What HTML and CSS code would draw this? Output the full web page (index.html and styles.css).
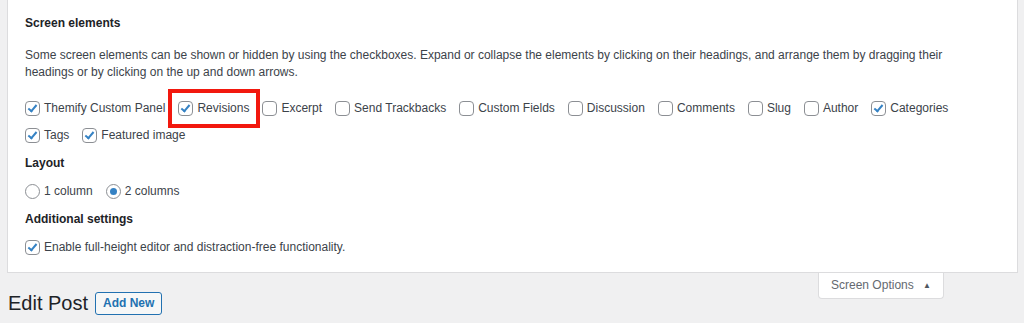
FILE: index.html
```html
<!DOCTYPE html>
<html lang="en">
<head>
  <meta charset="UTF-8">
  <title>Edit Post - Screen Options</title>
  <link rel="stylesheet" href="styles.css">
</head>
<body>
  <!-- Screen options panel -->
  <div id="screenOptions" class="panel">
    <fieldset class="metabox-prefs">
      <legend>Screen elements</legend>
      <p class="desc">Some screen elements can be shown or hidden by using the checkboxes. Expand or collapse the elements by clicking on their headings, and arrange them by dragging their headings or by clicking on the up and down arrows.</p>
      <div class="options">
        <label class="opt"><span class="box checked"></span>Themify Custom Panel</label>
        <label class="opt highlight"><span class="box checked"></span>Revisions</label>
        <label class="opt"><span class="box"></span>Excerpt</label>
        <label class="opt"><span class="box"></span>Send Trackbacks</label>
        <label class="opt"><span class="box"></span>Custom Fields</label>
        <label class="opt"><span class="box"></span>Discussion</label>
        <label class="opt"><span class="box"></span>Comments</label>
        <label class="opt"><span class="box"></span>Slug</label>
        <label class="opt"><span class="box"></span>Author</label>
        <label class="opt"><span class="box checked"></span>Categories</label>
        <label class="opt"><span class="box checked"></span>Tags</label>
        <label class="opt"><span class="box checked"></span>Featured image</label>
      </div>
    </fieldset>

    <fieldset class="columns-prefs">
      <legend>Layout</legend>
      <div class="options">
        <label class="opt"><span class="radio"></span>1 column</label>
        <label class="opt"><span class="radio checked"></span>2 columns</label>
      </div>
    </fieldset>

    <fieldset class="editor-expand">
      <legend>Additional settings</legend>
      <div class="options">
        <label class="opt"><span class="box checked"></span>Enable full-height editor and distraction-free functionality.</label>
      </div>
    </fieldset>
  </div>

  <!-- Screen options tab + title -->
  <div class="meta-links">
    <button class="meta-toggle">Screen Options <span class="arrow">&#9650;</span></button>
  </div>
  <div class="wrap-title">
    <h1>Edit Post</h1>
    <a class="page-title-action" href="#">Add New</a>
  </div>
</body>
</html>
```

FILE: styles.css
```css
body {
  margin: 0;
  background: #f0f0f1;
  color: #3c434a;
  font: 12px/1.4 "Liberation Sans", Arial, sans-serif;
}
/* Screen options panel */
.panel {
  margin: 0 6px 0 7px;
  padding: 14px 17px 11px;
  background: #fff;
  border: 1px solid #dcdcde;
  border-top: 0;
}
fieldset {
  margin: 0;
  padding: 0;
  border: 0;
}
legend {
  padding: 0;
  color: #1d2327;
  font-weight: 600;
  line-height: 18px;
}
.desc {
  margin: 15px 0 0;
  line-height: 17px;
  padding-right: 20px;
}
.options {
  display: flex;
  flex-wrap: wrap;
  column-gap: 13px;
  margin-top: 14px;
}
.columns-prefs,
.editor-expand {
  margin-top: 5px;
}
.columns-prefs .options,
.editor-expand .options {
  margin-top: 6px;
}
.editor-expand legend {
  margin-top: 2px;
}
.opt {
  position: relative;
  display: flex;
  align-items: center;
  height: 27px;
  white-space: nowrap;
}
.box,
.radio {
  box-sizing: border-box;
  flex: none;
  width: 15px;
  height: 15px;
  margin-right: 4px;
  border: 1px solid #8c8f94;
  border-radius: 4px;
  background: #fff;
  position: relative;
}
.box.checked::after {
  content: "";
  position: absolute;
  left: 4px;
  top: 1px;
  width: 3px;
  height: 7px;
  border: solid #3582c4;
  border-width: 0 2px 2px 0;
  transform: rotate(40deg);
}
.radio {
  border-radius: 50%;
}
.radio.checked::after {
  content: "";
  position: absolute;
  left: 3px;
  top: 3px;
  width: 7px;
  height: 7px;
  border-radius: 50%;
  background: #3582c4;
}
/* red annotation frame */
.highlight::after {
  content: "";
  position: absolute;
  left: -10px;
  right: -11px;
  top: -6px;
  bottom: -6px;
  border: 4px solid #f2180e;
}
/* tab under the panel */
.meta-links {
  float: right;
  margin-right: 80px;
}
.meta-toggle {
  box-sizing: border-box;
  width: 126px;
  height: 26px;
  padding: 0 0 2px;
  background: #fff;
  border: 1px solid #dcdcde;
  border-top: 0;
  border-radius: 0 0 4px 4px;
  color: #646970;
  font: 12px "Liberation Sans", Arial, sans-serif;
}
.arrow {
  font-size: 8px;
  margin-left: 6px;
  vertical-align: 1px;
  color: #50575e;
}
.wrap-title {
  display: flex;
  align-items: center;
  margin: 17px 0 0 8px;
  height: 26px;
}
h1 {
  margin: 0;
  color: #1d2327;
  font-size: 20px;
  font-weight: 400;
  line-height: 26px;
}
.page-title-action {
  box-sizing: border-box;
  height: 23px;
  margin-left: 7px;
  padding: 0 7px;
  border: 1px solid #2271b1;
  border-radius: 3px;
  background: #f6f7f7;
  color: #2271b1;
  font-size: 12px;
  font-weight: 600;
  line-height: 21px;
  text-decoration: none;
}
```
